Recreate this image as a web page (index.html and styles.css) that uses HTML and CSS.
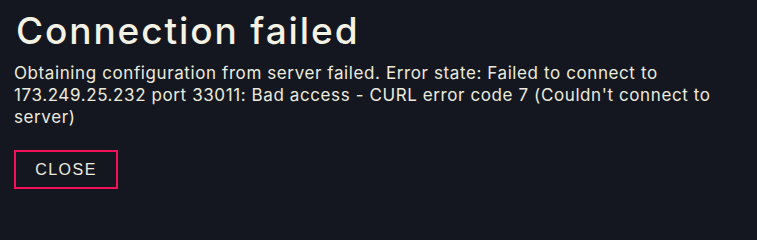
FILE: index.html
```html
<!DOCTYPE html>
<html>
<head>
<meta charset="utf-8">
<link rel="stylesheet" href="styles.css">
</head>
<body>
<div class="dialog">
  <h1 class="title">Connection failed</h1>
  <p class="message">Obtaining configuration from server failed. Error state: Failed to connect to 173.249.25.232 port 33011: Bad access - CURL error code 7 (Couldn't connect to server)</p>
  <div class="actions">
    <button class="btn-close">CLOSE</button>
  </div>
</div>
</body>
</html>
```
FILE: styles.css
```css
html, body {
  margin: 0;
  padding: 0;
  background: #141720;
  height: 100%;
}
.dialog {
  padding: 9px 14px 0 14px;
  width: 729px;
  box-sizing: content-box;
}
.title {
  margin: 0;
  padding-left: 2px;
  font-family: "Inter", "DejaVu Sans", sans-serif;
  font-weight: 500;
  font-size: 37px;
  line-height: 44px;
  letter-spacing: 1.9px;
  color: #f4f2e4;
}
.message {
  margin: 9px 0 0 0;
  font-family: "Inter", sans-serif;
  font-size: 17px;
  line-height: 22px;
  letter-spacing: 0.6px;
  color: #ecebdd;
}
.actions {
  margin-top: 22px;
  display: flex;
}
.btn-close {
  background: transparent;
  border: 2px solid #f5115a;
  color: #ecebdd;
  font-family: "Liberation Sans", Arial, sans-serif;
  font-size: 16px;
  letter-spacing: 1.5px;
  width: 104px;
  height: 39px;
  padding: 0;
  cursor: pointer;
}
```
